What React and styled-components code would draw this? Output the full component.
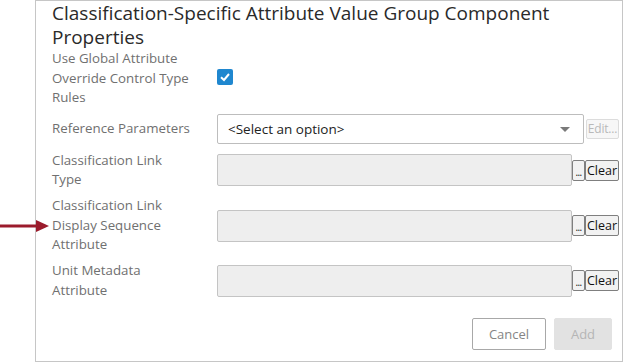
import styled, { createGlobalStyle } from "styled-components";

const GlobalStyle = createGlobalStyle`
	html, body {
		margin: 0;
		padding: 0;
		background: #fff;
	}
	body {
		font-family: "Open Sans", "Noto Sans", sans-serif;
	}
`;

const fields = [
	{ id: "type", lines: ["Classification Link", "Type"] },
	{ id: "seq", lines: ["Classification Link", "Display Sequence", "Attribute"] },
	{ id: "unit", lines: ["Unit Metadata", "Attribute"] },
];

const LabelText = ({ lines }) => (
	<Label>
		{lines.map((l) => (
			<LabelLine key={l}>{l}</LabelLine>
		))}
	</Label>
);

const App = () => {
	return (
		<Page>
			<GlobalStyle />
			<Pointer width="50" height="14" viewBox="0 0 50 14">
				<line x1="0" y1="7" x2="38" y2="7" stroke="#9b1b2c" strokeWidth="3" />
				<polygon points="36,1 49,7 36,13" fill="#9b1b2c" />
			</Pointer>
			<Panel>
				<Title>Classification-Specific Attribute Value Group Component Properties</Title>
				<Form>
					<Row>
						<LabelText lines={["Use Global Attribute", "Override Control Type", "Rules"]} />
						<Value>
							<Checkbox>
								<svg width="12" height="12" viewBox="0 0 12 12">
									<polyline points="2,6.2 5,9 10,3" fill="none" stroke="#fff" strokeWidth="2" />
								</svg>
							</Checkbox>
						</Value>
					</Row>
					<Row>
						<LabelText lines={["Reference Parameters"]} />
						<Value>
							<Select>
								<span>&lt;Select an option&gt;</span>
								<Caret />
							</Select>
							<EditButton>Edit...</EditButton>
						</Value>
					</Row>
					{fields.map((f) => (
						<Row key={f.id}>
							<LabelText lines={f.lines} />
							<Value>
								<ReadOnlyField />
								<SmallButton $narrow>...</SmallButton>
								<SmallButton>Clear</SmallButton>
							</Value>
						</Row>
					))}
				</Form>
				<Footer>
					<CancelButton>Cancel</CancelButton>
					<AddButton>Add</AddButton>
				</Footer>
			</Panel>
		</Page>
	);
};

const Page = styled.div`
	position: relative;
	width: 624px;
	height: 362px;
	overflow: hidden;
`;

const Pointer = styled.svg`
	position: absolute;
	left: 0;
	top: 219px;
`;

const Panel = styled.div`
	box-sizing: border-box;
	margin-left: 35px;
	width: 588px;
	height: 362px;
	border: 1px solid #c6c6c6;
	padding: 0 3px 0 16px;
	display: flex;
	flex-direction: column;
`;

const Title = styled.div`
	font-size: 19px;
	line-height: 24px;
	color: #2a2a2a;
	padding-right: 10px;
`;

const Form = styled.div`
	display: flex;
	flex-direction: column;
	gap: 6.6px;
`;

const Row = styled.div`
	display: flex;
	align-items: center;
`;

const Label = styled.div`
	flex: 0 0 165px;
	font-size: 13.3px;
	line-height: 19.5px;
	color: #707070;
`;

const LabelLine = styled.div`
	white-space: nowrap;
`;

const Value = styled.div`
	flex: 1;
	display: flex;
	align-items: center;
`;

const Checkbox = styled.div`
	width: 16px;
	height: 16px;
	border-radius: 2px;
	background: #1f87cf;
	display: flex;
	align-items: center;
	justify-content: center;
	margin-top: -3px;
`;

const Select = styled.div`
	flex: 1;
	box-sizing: border-box;
	height: 30px;
	border: 1px solid #bdbdbd;
	border-radius: 2px;
	display: flex;
	align-items: center;
	justify-content: space-between;
	padding: 0 13px 0 10px;
	font-size: 13.5px;
	color: #222;
`;

const Caret = styled.span`
	width: 0;
	height: 0;
	border-left: 5px solid transparent;
	border-right: 5px solid transparent;
	border-top: 5px solid #7a7a7a;
`;

const EditButton = styled.div`
	box-sizing: border-box;
	width: 33px;
	height: 20px;
	margin-left: 2px;
	border: 1px solid #dcdcdc;
	border-radius: 2px;
	background: #f7f7f7;
	font-size: 12px;
	line-height: 18px;
	color: #b9b9b9;
	text-align: center;
	overflow: hidden;
	white-space: nowrap;
	letter-spacing: -0.2px;
`;

const ReadOnlyField = styled.div`
	flex: 1;
	box-sizing: border-box;
	height: 32px;
	border: 1px solid #c4c4c4;
	border-radius: 2px;
	background: #eeeeee;
`;

const SmallButton = styled.div`
	box-sizing: border-box;
	width: ${(p) => (p.$narrow ? "13px" : "34px")};
	height: 21px;
	border: 1px solid #7f7f7f;
	border-radius: 2px;
	background: #f2f2f2;
	font-size: ${(p) => (p.$narrow ? "10px" : "12.5px")};
	line-height: ${(p) => (p.$narrow ? "22px" : "19px")};
	color: #111;
	text-align: center;
	overflow: hidden;
	white-space: nowrap;
	letter-spacing: ${(p) => (p.$narrow ? "-0.6px" : "0")};
`;

const Footer = styled.div`
	display: flex;
	justify-content: flex-end;
	gap: 8px;
	margin-top: 18px;
	padding-right: 7px;
`;

const FooterButton = styled.div`
	box-sizing: border-box;
	height: 32px;
	border-radius: 2px;
	font-size: 13px;
	line-height: 30px;
	text-align: center;
`;

const CancelButton = styled(FooterButton)`
	width: 74px;
	border: 1px solid #a8a8a8;
	background: #fff;
	color: #858585;
`;

const AddButton = styled(FooterButton)`
	width: 58px;
	border: 1px solid #e2e2e2;
	background: #e2e2e2;
	color: #b5b5b5;
`;

export default App;
